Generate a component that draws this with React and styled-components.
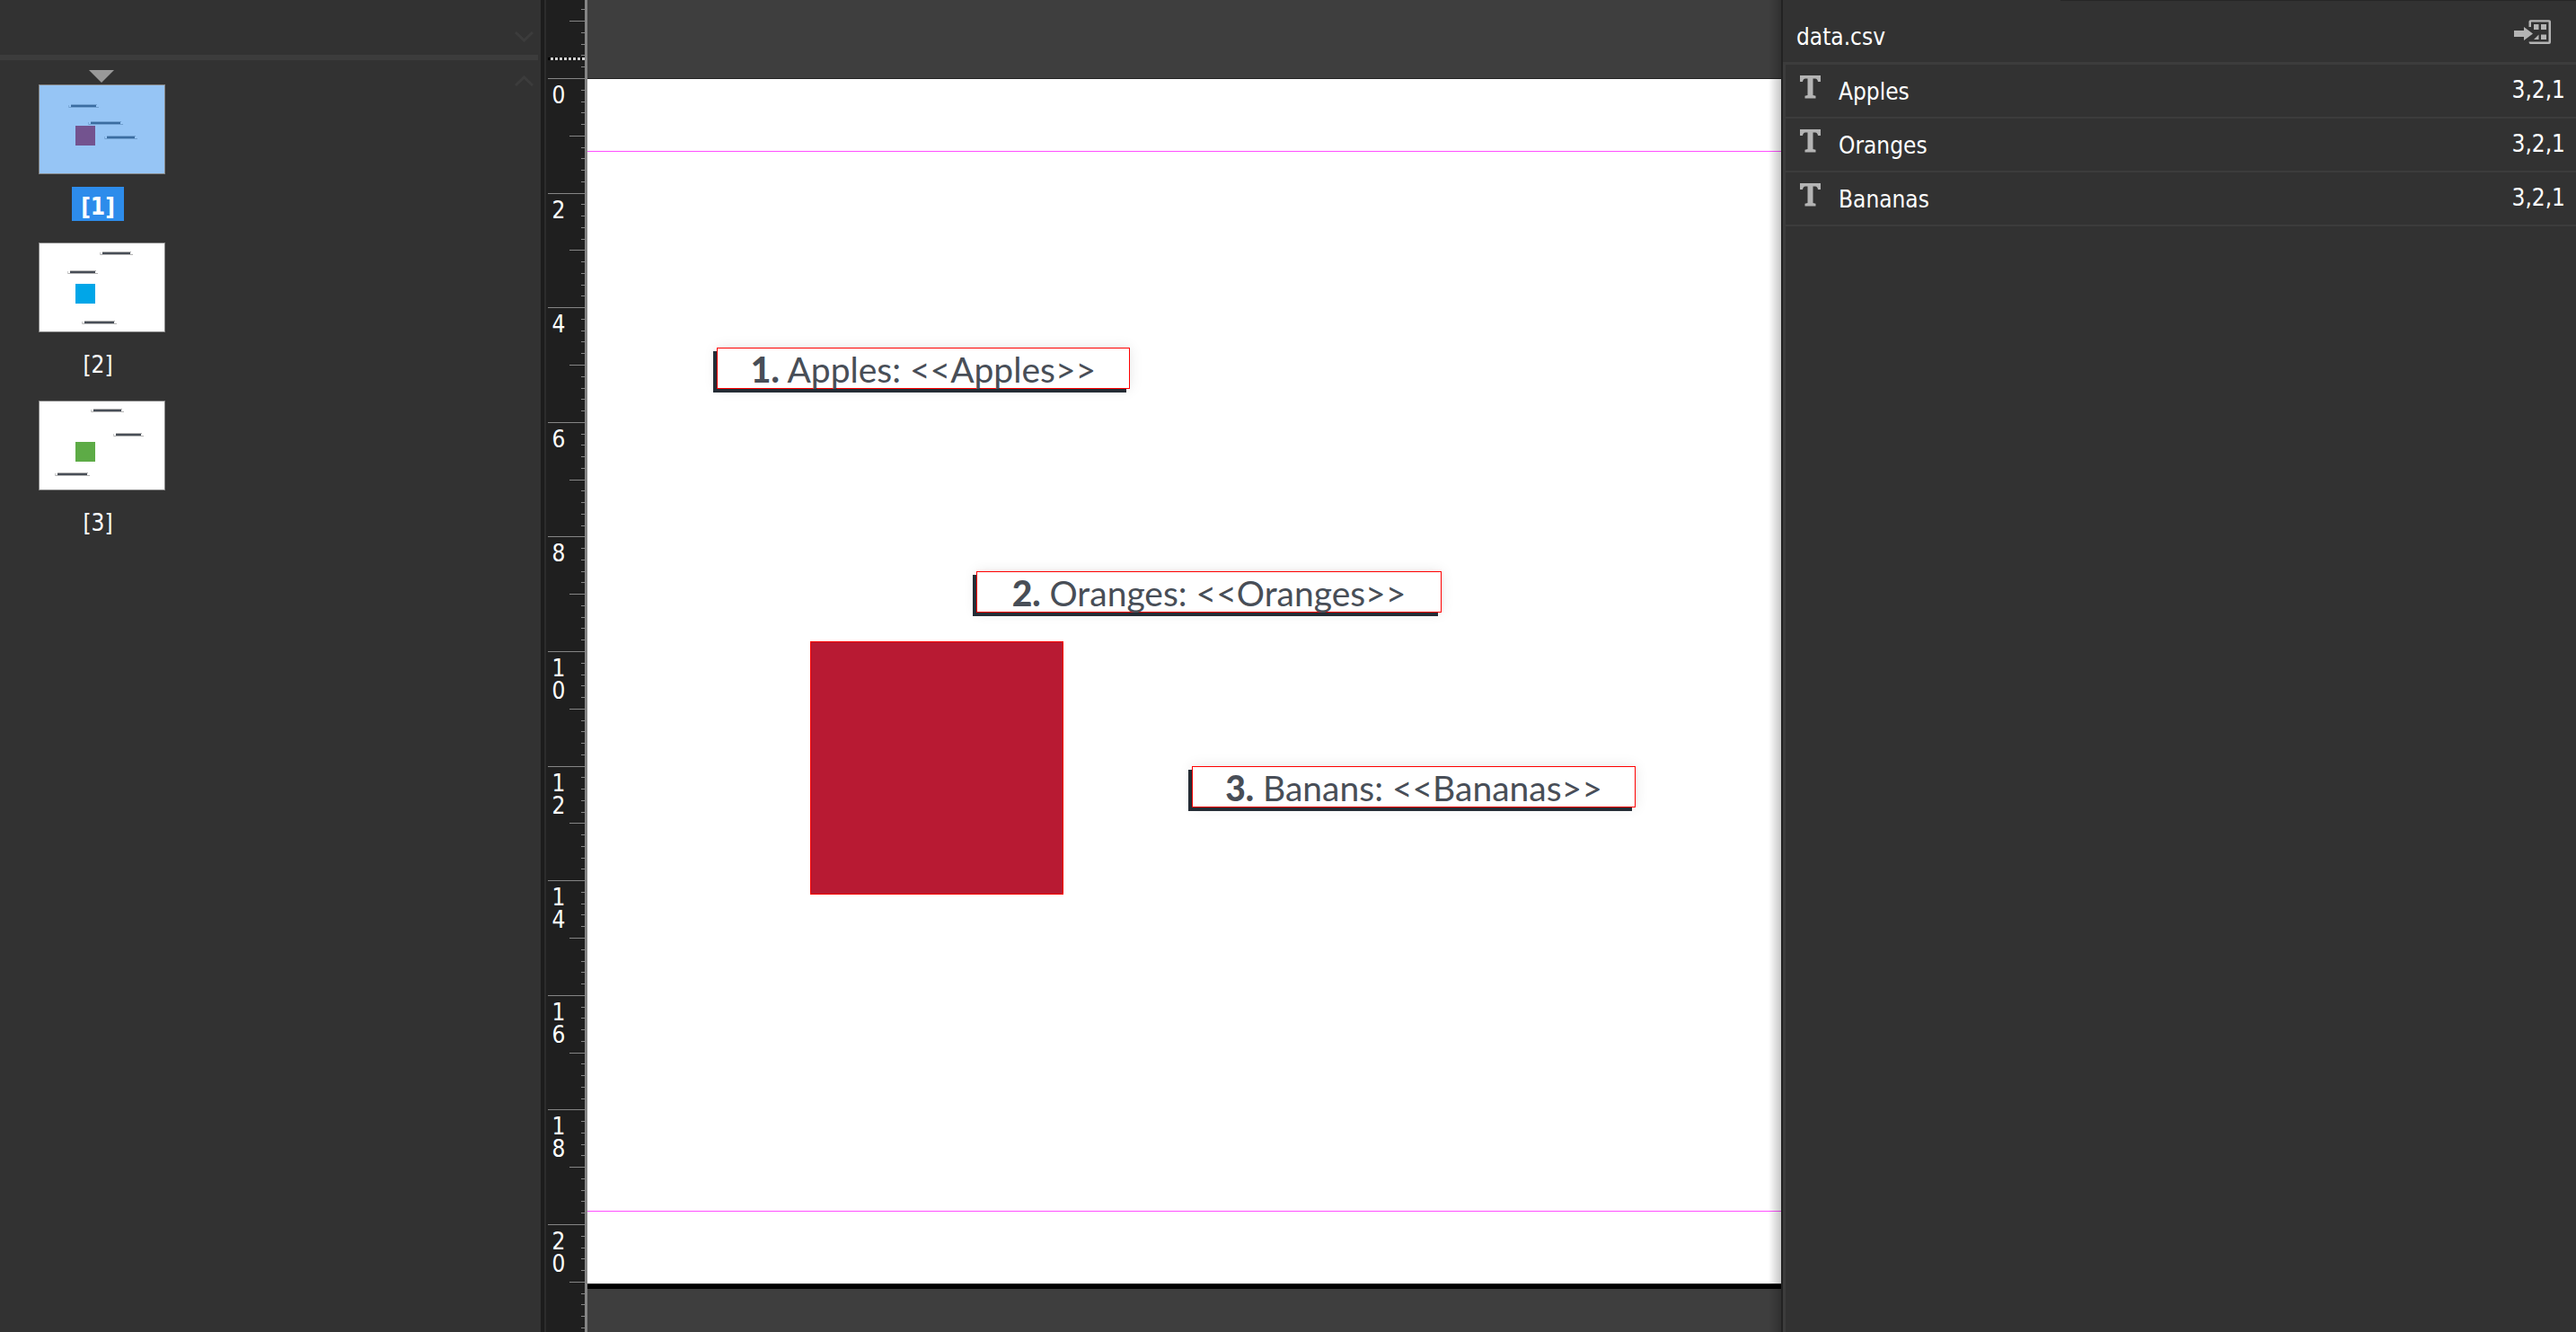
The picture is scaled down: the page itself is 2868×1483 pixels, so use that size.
import React, { useState } from 'react';
import styled, { createGlobalStyle } from 'styled-components';

const GlobalStyle = createGlobalStyle`
  * {
    box-sizing: border-box;
  }

  body {
    margin: 0;
    background-color: #323232;
    color: #ffffff;
    font-family: "DejaVu Sans Condensed", "DejaVu Sans", sans-serif;
    font-size: 26px;
    line-height: 36px;
  }
`;

const INK = '#484e57';

const pages = [
  {
    id: 1,
    fill: '#b81a33',
    lines: [[36, 23, 28], [58, 42, 33], [76, 58, 31]],
  },
  {
    id: 2,
    fill: '#00a6e8',
    lines: [[71, 11, 31], [35, 32, 28], [51, 88, 33]],
  },
  {
    id: 3,
    fill: '#5dab46',
    lines: [[61, 10, 31], [86, 37, 28], [21, 81, 33]],
  },
];

const frames = [
  { no: '1.', text: 'Apples: <<Apples>>', x: 144, y: 299, w: 460 },
  { no: '2.', text: 'Oranges: <<Oranges>>', x: 433, y: 548, w: 518 },
  { no: '3.', text: 'Banans: <<Bananas>>', x: 673, y: 765, w: 494 },
];

const fields = [
  { name: 'Apples', records: '3,2,1' },
  { name: 'Oranges', records: '3,2,1' },
  { name: 'Bananas', records: '3,2,1' },
];

const ZERO = 87;
const UNIT = 638 / 10;

const PageThumb = ({ page, selected }) => (
  <svg width="141" height="100" viewBox="0 0 141 100" shapeRendering="crispEdges">
    <rect x="0" y="0" width="141" height="100" fill="#858585" />
    <rect x="1" y="1" width="139" height="98" fill="#ffffff" />
    {page.lines.map(([x, y, w]) => (
      <g key={`${x}-${y}`}>
        <rect x={x - 3} y={y + 2} width={w + 6} height="1" fill="#b4b4b4" />
        <rect x={x - 3} y={y} width="1" height="3" fill="#cccccc" />
        <rect x={x} y={y - 1} width={w + 1} height="1" fill="#b4b4b4" />
        <rect x={x} y={y} width={w} height="2" fill={INK} />
      </g>
    ))}
    <rect x="41" y="46" width="22" height="22" fill={page.fill} />
    {selected && <rect x="1" y="1" width="139" height="98" fill="#2d8ceb" fillOpacity="0.5" />}
  </svg>
);

const VerticalRuler = () => {
  const ticks = [];
  for (let i = -6; i <= 109; i++) {
    const y = Math.round(ZERO + (i * UNIT) / 5);
    const length = i % 10 === 0 ? 41 : i % 5 === 0 ? 17 : 4;
    ticks.push(<rect key={i} x={43 - length} y={y} width={length} height="1" fill="#858585" />);
  }
  // numbers run down the ruler, one digit per line
  const labels = [];
  for (let n = 0; n <= 20; n += 2) {
    const y = Math.round(ZERO + n * UNIT) + 28;
    labels.push(
      <text key={n} textAnchor="middle" fill="#ffffff">
        {String(n).split('').map((digit, i) => (
          <tspan key={i} x="14" y={y + i * 25}>{digit}</tspan>
        ))}
      </text>
    );
  }
  return (
    <svg width="43" height="1483" shapeRendering="crispEdges">
      {ticks}
      {labels}
      <rect x="2" y="64" width="41" height="3" fill="#000000" />
      <path d="M5 65.5H43" stroke="#d0d0d0" strokeWidth="3" strokeDasharray="3 2" />
    </svg>
  );
};

const Chevron = ({ up }) => (
  <svg width="21" height="12" viewBox="0 0 21 12" fill="none" stroke="#3c3c3c" strokeWidth="3">
    <path d={up ? 'M1 11 L10.5 2 L20 11' : 'M1 1 L10.5 10 L20 1'} />
  </svg>
);

const TextFieldIcon = () => (
  <svg width="23" height="26" viewBox="0 0 23 26" fill="#b4b4b4">
    <path d="M0 0 H23 V7 H20 Q19.500 3.500 17 3.500 H14.500 V22 L17.500 22.800 V25.500 H5.500 V22.800 L8.500 22 V3.500 H6 Q3.500 3.500 3 7 H0 Z" />
  </svg>
);

const UpdateIcon = () => (
  <svg width="42" height="28" viewBox="0 0 42 28" fill="#b4b4b4">
    <path d="M0 13 H11 V9 L21 16.500 L11 24 V20 H0 Z" />
    <path d="M16.500 9 V3 Q16.500 1.200 18.500 1.200 H39 Q41 1.200 41 3 V26 Q41 28 39 28 H18.500 Q16.500 28 16.500 25.500 H38.500 V3.500 H19 V9 Z" />
    <path d="M22 6 H27.500 V12 H22 Z M30 6 H36 V12 H30 Z M30 17.500 H36 V23 H30 Z M27.500 17.500 V23 H22 Z" />
  </svg>
);

const App = () => {
  const [current, setCurrent] = useState(1);

  return (
    <Workspace>
      <GlobalStyle />

      <PagesPanel>
        <MastersStrip>
          <Chevron />
        </MastersStrip>
        <PagesArea>
          <PageList>
            {pages.map((page) => (
              <PageItem key={page.id}>
                <PageButton onClick={() => setCurrent(page.id)}>
                  <PageThumb page={page} selected={page.id === current} />
                  <PageLabel $selected={page.id === current}>[{page.id}]</PageLabel>
                </PageButton>
              </PageItem>
            ))}
          </PageList>
          <SpreadMarker width="28" height="14" viewBox="0 0 28 14">
            <path d="M0 0 H28 L14 14 Z" fill="#999999" />
          </SpreadMarker>
          <Chevron up />
        </PagesArea>
      </PagesPanel>

      <Divider />

      <Ruler>
        <VerticalRuler />
      </Ruler>

      <Pasteboard>
        <Page>
          <Guide $y={80} />
          <Guide $y={1260} />
          <Square />
          {frames.map((frame) => (
            <TextFrame key={frame.no} $x={frame.x} $y={frame.y} $w={frame.w}>
              <strong>{frame.no}</strong> {frame.text}
            </TextFrame>
          ))}
        </Page>
      </Pasteboard>

      <DataPanel>
        <HeaderEdge />
        <DataHeader>
          <DataTitle>data.csv</DataTitle>
          <IconButton aria-label="Update data">
            <UpdateIcon />
          </IconButton>
        </DataHeader>
        <DataBody>
          <FieldTable>
            <tbody>
              {fields.map((field) => (
                <FieldRow key={field.name}>
                  <IconCell>
                    <TextFieldIcon />
                  </IconCell>
                  <NameCell>{field.name}</NameCell>
                  <RecordsCell>{field.records}</RecordsCell>
                </FieldRow>
              ))}
            </tbody>
          </FieldTable>
        </DataBody>
      </DataPanel>
    </Workspace>
  );
};

const Workspace = styled.div`
  display: grid;
  grid-template-columns: 602px 6px 46px minmax(0, 1fr) 885px;
  min-height: 100vh;
`;

const PagesPanel = styled.aside`
  display: flex;
  flex-direction: column;
  background-color: #323232;
`;

const MastersStrip = styled.div`
  display: flex;
  justify-content: flex-end;
  align-items: flex-end;
  height: 67px;
  margin-right: 3px;
  padding: 0 5px 14px 0;
  border-bottom: 6px solid #3c3c3c;
`;

const PagesArea = styled.div`
  position: relative;
  flex: 1;
  display: flex;
  justify-content: space-between;
  align-items: flex-start;
  padding: 17px 8px 0 43px;
`;

const PageList = styled.ul`
  display: flex;
  flex-direction: column;
  gap: 24px;
  margin: 0;
  padding: 10px 0 0;
  list-style: none;
`;

const PageItem = styled.li`
  display: flex;
`;

const PageButton = styled.button`
  display: flex;
  flex-direction: column;
  gap: 14px;
  padding: 0;
  border: none;
  background: none;
  color: inherit;
  font: inherit;
  cursor: pointer;
`;

const PageLabel = styled.span`
  width: 58px;
  height: 38px;
  margin-left: 37px;
  background-color: ${({ $selected }) => ($selected ? '#2d8ceb' : 'transparent')};
  font-weight: ${({ $selected }) => ($selected ? 700 : 400)};
  line-height: 44px;
  text-align: center;
`;

const SpreadMarker = styled.svg`
  position: absolute;
  top: 11px;
  left: 99px;
`;

const Divider = styled.div`
  border-right: 2px solid #2c2c2c;
  background-color: #1c1c1c;
`;

const Ruler = styled.div`
  overflow: hidden;
  border-right: 3px solid #858585;
  background-color: #1f1f1f;
  line-height: 0;
`;

const Pasteboard = styled.main`
  position: relative;
  overflow: hidden;
  padding-top: 87px;
  background-color: #3e3e3e;

  &::after {
    content: "";
    position: absolute;
    top: 0;
    right: 0;
    bottom: 0;
    width: 14px;
    background: linear-gradient(to right, transparent, rgba(0, 0, 0, 0.22));
  }
`;

const Page = styled.div`
  position: relative;
  height: 1343px;
  border-top: 1px solid #222222;
  border-bottom: 1px solid #222222;
  background-color: #ffffff;
  box-shadow: 0 5px 0 #000000;
`;

const Guide = styled.div`
  position: absolute;
  top: ${({ $y }) => $y}px;
  left: 0;
  right: 0;
  height: 1px;
  background-color: #ff4fff;
`;

const Square = styled.div`
  position: absolute;
  top: 626px;
  left: 248px;
  width: 282px;
  height: 282px;
  border: 1px solid #ff0000;
  background-color: #b81a33;
`;

const TextFrame = styled.p`
  position: absolute;
  top: ${({ $y }) => $y}px;
  left: ${({ $x }) => $x}px;
  width: ${({ $w }) => $w}px;
  height: 46px;
  margin: 0;
  border: 1px solid #ff0000;
  background-color: #ffffff;
  box-shadow: -4px 4px 0 #242c35, 0 0 14px rgba(0, 0, 0, 0.1);
  color: ${INK};
  font-family: Lato, sans-serif;
  font-size: 39px;
  line-height: 46px;
  text-align: center;
  white-space: nowrap;

  strong {
    font-weight: 900;
  }
`;

const DataPanel = styled.aside`
  display: flex;
  flex-direction: column;
  border-left: 2px solid #222222;
  background-color: #323232;
`;

const HeaderEdge = styled.div`
  align-self: flex-end;
  width: 65%;
  height: 1px;
  background-color: #262626;
`;

const DataHeader = styled.header`
  display: flex;
  justify-content: space-between;
  align-items: center;
  height: 71px;
  padding: 0 27px 0 15px;
  border-bottom: 3px solid #3c3c3c;
`;

const DataTitle = styled.h1`
  margin: 12px 0 0;
  font-size: 26px;
  font-weight: 400;
`;

const IconButton = styled.button`
  display: flex;
  padding: 0;
  border: none;
  background: none;
  cursor: pointer;
`;

const DataBody = styled.div`
  flex: 1;
  border-left: 3px solid #3c3c3c;
`;

const FieldTable = styled.table`
  width: 100%;
  border-spacing: 0;
`;

const FieldRow = styled.tr`
  height: 60px;

  td {
    border-bottom: 2px solid #3c3c3c;
  }
`;

const IconCell = styled.td`
  width: 59px;
  padding: 12px 0 0 16px;
  line-height: 0;
  vertical-align: top;
`;

const NameCell = styled.td`
  padding: 12px 0 0;
  vertical-align: top;
`;

const RecordsCell = styled.td`
  padding: 10px 12px 0 0;
  text-align: right;
  vertical-align: top;
`;

export default App;
